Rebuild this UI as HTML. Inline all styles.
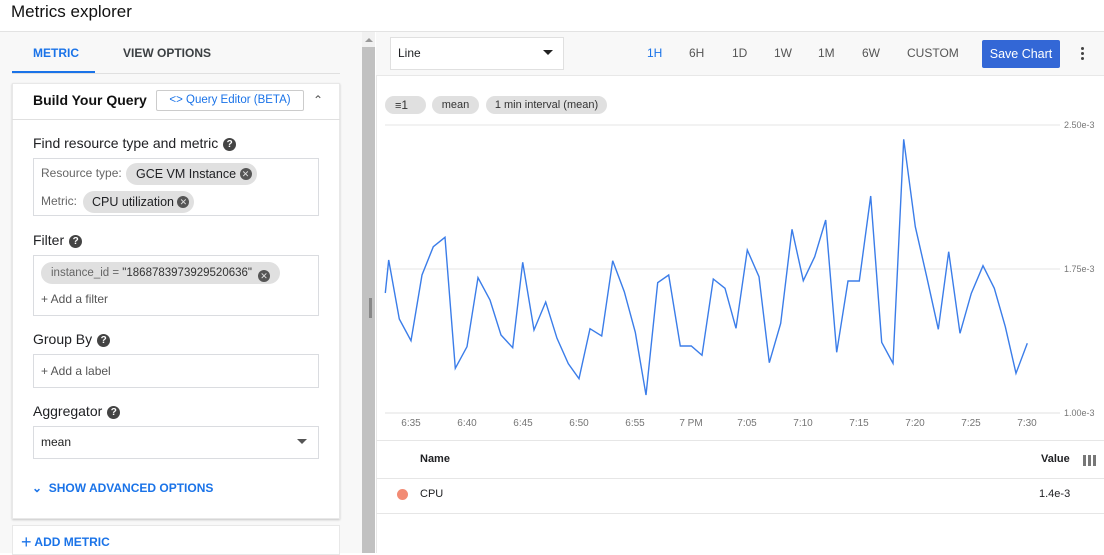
<!DOCTYPE html>
<html><head><meta charset="utf-8"><style>
*{box-sizing:border-box;margin:0;padding:0}
body{width:1104px;height:553px;overflow:hidden;background:#fff;font-family:"Liberation Sans",Arial,sans-serif;color:#202124;position:relative}
.a{position:absolute;white-space:nowrap}
.help{display:inline-block;width:13px;height:13px;border-radius:50%;background:#444;color:#fff;font-size:10px;font-weight:bold;text-align:center;line-height:13px;vertical-align:1px;margin-left:5px}
.chip{position:absolute;white-space:nowrap;background:#e0e0e0;border-radius:12px;height:22px;line-height:22px;font-size:13px;padding:0 10px}
.x{display:inline-block;width:12px;height:12px;border-radius:50%;background:#555;color:#e0e0e0;font-size:9px;line-height:12px;text-align:center;vertical-align:1px}
.box{position:absolute;left:33px;width:286px;border:1px solid #dadce0;background:#fff}
.lbl{position:absolute;left:33px;font-size:14px;white-space:nowrap}
.xl{position:absolute;top:418px;font-size:10px;color:#757575;transform:translateX(-50%)}
</style></head><body>
<div class="a" style="left:11px;top:2px;font-size:17px;color:#111">Metrics explorer</div>
<div class="a" style="left:0;top:31px;width:1104px;height:1px;background:#e3e3e3"></div>
<div class="a" style="left:0;top:32px;width:362px;height:521px;background:#f8f8f8"></div>
<div class="a" style="left:33px;top:46px;font-size:12px;font-weight:bold;color:#1a73e8">METRIC</div>
<div class="a" style="left:123px;top:46px;font-size:12px;font-weight:bold;color:#3c4043">VIEW OPTIONS</div>
<div class="a" style="left:12px;top:73px;width:328px;height:1px;background:#e0e0e0"></div>
<div class="a" style="left:12px;top:71px;width:83px;height:2px;background:#1a73e8"></div>
<div class="a" style="left:12px;top:83px;width:328px;height:436px;background:#fff;border:1px solid #e8e8e8;box-shadow:0 1px 2px rgba(0,0,0,.2)"></div>
<div class="a" style="left:12px;top:119px;width:328px;height:1px;background:#e0e0e0"></div>
<div class="a" style="left:33px;top:92px;font-size:14px;font-weight:bold;color:#111">Build Your Query</div>
<div class="a" style="left:156px;top:90px;width:148px;height:21px;border:1px solid #ccc;border-radius:2px;font-size:11.5px;color:#1a73e8;line-height:19px;text-align:center">&lt;&gt; Query Editor (BETA)</div>
<div class="a" style="left:313px;top:93px;font-size:12px;color:#555">&#8963;</div>
<div class="lbl" style="top:135px">Find resource type and metric<span class="help">?</span></div>
<div class="box" style="top:158px;height:58px"></div>
<div class="a" style="left:41px;top:166px;font-size:12px;color:#666">Resource type:</div>
<div class="chip" style="left:126px;top:163px;padding:0 5px 0 10px;font-size:12.5px">GCE VM Instance <span class="x">✕</span></div>
<div class="a" style="left:41px;top:194px;font-size:12px;color:#666">Metric:</div>
<div class="chip" style="left:83px;top:191px;padding:0 5px 0 9px;font-size:12.5px">CPU utilization <span class="x">✕</span></div>
<div class="lbl" style="top:232px">Filter<span class="help">?</span></div>
<div class="box" style="top:255px;height:61px"></div>
<div class="chip" style="left:41px;top:262px;width:239px;font-size:11.5px;color:#666">instance_id = <span style="color:#333">"1868783973929520636"</span></div>
<div class="a" style="left:258px;top:267px"><span class="x">✕</span></div>
<div class="a" style="left:41px;top:292px;font-size:12px;color:#555">+ Add a filter</div>
<div class="lbl" style="top:331px">Group By<span class="help">?</span></div>
<div class="box" style="top:354px;height:34px"></div>
<div class="a" style="left:41px;top:364px;font-size:12px;color:#555">+ Add a label</div>
<div class="lbl" style="top:403px">Aggregator<span class="help">?</span></div>
<div class="box" style="top:426px;height:33px"></div>
<div class="a" style="left:41px;top:435px;font-size:12px;color:#222">mean</div>
<div class="a" style="left:297px;top:439px;width:0;height:0;border-left:5px solid transparent;border-right:5px solid transparent;border-top:5px solid #555"></div>
<div class="a" style="left:32px;top:481px;font-size:12px;color:#1a73e8;font-weight:bold">&#8964;&nbsp; SHOW ADVANCED OPTIONS</div>
<div class="a" style="left:12px;top:525px;width:328px;height:30px;background:#fff;border:1px solid #e8e8e8"></div>
<div class="a" style="left:21px;top:532px;font-size:12px;color:#1a73e8;font-weight:bold"><span style="font-size:18px;font-weight:normal;vertical-align:-2px">+</span> ADD METRIC</div>
<div class="a" style="left:362px;top:32px;width:13px;height:521px;background:#f1f1f1"></div>
<div class="a" style="left:365px;top:38px;width:0;height:0;border-left:4px solid transparent;border-right:4px solid transparent;border-bottom:4px solid #999"></div>
<div class="a" style="left:362px;top:47px;width:13px;height:506px;background:#c1c1c1"></div>
<div class="a" style="left:369px;top:298px;width:3px;height:20px;background:#888"></div>
<div class="a" style="left:376px;top:32px;width:728px;height:44px;background:#f8f8f8;border-bottom:1px solid #e8e8e8"></div>
<div class="a" style="left:390px;top:37px;width:174px;height:33px;background:#fff;border:1px solid #e0e0e0"></div>
<div class="a" style="left:398px;top:46px;font-size:12px">Line</div>
<div class="a" style="left:543px;top:50px;width:0;height:0;border-left:5px solid transparent;border-right:5px solid transparent;border-top:5px solid #222"></div>
<div class="a" style="left:647px;top:46px;font-size:12px;color:#1a73e8">1H</div>
<div class="a" style="left:689px;top:46px;font-size:12px;color:#555">6H</div>
<div class="a" style="left:732px;top:46px;font-size:12px;color:#555">1D</div>
<div class="a" style="left:774px;top:46px;font-size:12px;color:#555">1W</div>
<div class="a" style="left:818px;top:46px;font-size:12px;color:#555">1M</div>
<div class="a" style="left:862px;top:46px;font-size:12px;color:#555">6W</div>
<div class="a" style="left:907px;top:46px;font-size:12px;color:#555">CUSTOM</div>
<div class="a" style="left:982px;top:40px;width:78px;height:28px;background:#3367d6;border-radius:2px;color:#fff;font-size:12.5px;line-height:28px;text-align:center">Save Chart</div>
<div class="a" style="left:1081px;top:47px;width:3px;font-size:0">
<div style="width:3px;height:3px;background:#444;border-radius:50%;margin-bottom:2px"></div><div style="width:3px;height:3px;background:#444;border-radius:50%;margin-bottom:2px"></div><div style="width:3px;height:3px;background:#444;border-radius:50%"></div></div>
<div class="a" style="left:376px;top:76px;width:1px;height:477px;background:#e8e8e8"></div>
<div class="chip" style="left:385px;top:96px;height:18px;line-height:18px;font-size:12px;padding:0 6px 0 10px;color:#333;width:41px"><span style="font-size:11px">&#8801;</span>1</div>
<div class="chip" style="left:432px;top:96px;height:18px;line-height:18px;font-size:11px;color:#333;width:47px;text-align:center;padding:0">mean</div>
<div class="chip" style="left:486px;top:96px;height:18px;line-height:18px;font-size:11px;color:#333;width:121px;text-align:center;padding:0">1 min interval (mean)</div>
<svg class="a" style="left:0;top:0" width="1104" height="553">
<line x1="385" y1="125" x2="1060" y2="125" stroke="#e6e6e6"/>
<line x1="385" y1="269" x2="1060" y2="269" stroke="#e6e6e6"/>
<line x1="385" y1="413" x2="1060" y2="413" stroke="#e0e0e0"/>
<polyline fill="none" stroke="#3b7de9" stroke-width="1.4" points="385.3,293 388.7,260 399.3,319 411,340.7 422,275 433.3,246.7 445,237.3 455.3,368.3 467,346.7 478,277.7 490,300 501,335 512.7,347.7 522.7,262.3 534,330 545.7,302 557,338.3 568.3,363.7 579,378.7 590,328.7 601.7,336 612.7,260.7 624.3,291.7 635.3,332.3 646,395 657.7,282.7 668.7,275 680.3,346 691.3,346 702,355.3 713.3,279 725,288.3 736,328.3 747.3,250 759,276.7 769.3,362.7 780.7,323.3 792,229.3 803.3,280.7 814.7,256.7 825.7,220 836.7,352.3 848,281 859.3,281 870.7,196 881.7,342.3 893,363.3 903.7,139.3 915.3,226.7 926.7,276.7 938.3,329.3 948.7,251.7 960,333.3 971.3,293.3 983,265.7 994.3,288.3 1005.3,326.7 1016,373.3 1027.3,343.3"/>
</svg>
<div class="a" style="left:1064px;top:120px;font-size:9px;color:#777">2.50e-3</div>
<div class="a" style="left:1064px;top:264px;font-size:9px;color:#777">1.75e-3</div>
<div class="a" style="left:1064px;top:408px;font-size:9px;color:#777">1.00e-3</div>
<div class="xl" style="left:411px">6:35</div><div class="xl" style="left:467px">6:40</div><div class="xl" style="left:523px">6:45</div><div class="xl" style="left:579px">6:50</div><div class="xl" style="left:635px">6:55</div><div class="xl" style="left:691px">7 PM</div><div class="xl" style="left:747px">7:05</div><div class="xl" style="left:803px">7:10</div><div class="xl" style="left:859px">7:15</div><div class="xl" style="left:915px">7:20</div><div class="xl" style="left:971px">7:25</div><div class="xl" style="left:1027px">7:30</div>
<div class="a" style="left:376px;top:440px;width:728px;height:1px;background:#e6e6e6"></div>
<div class="a" style="left:420px;top:453px;font-size:11px;font-weight:bold">Name</div>
<div class="a" style="left:1041px;top:453px;font-size:11px;font-weight:bold">Value</div>
<div class="a" style="left:1083px;top:455px;width:14px;height:11px;background:repeating-linear-gradient(90deg,#777 0 3px,transparent 3px 5px)"></div>
<div class="a" style="left:376px;top:478px;width:728px;height:1px;background:#e6e6e6"></div>
<div class="a" style="left:397px;top:489px;width:11px;height:11px;border-radius:50%;background:#f28b74"></div>
<div class="a" style="left:420px;top:488px;font-size:11px">CPU</div>
<div class="a" style="left:1039px;top:488px;font-size:11px">1.4e-3</div>
<div class="a" style="left:376px;top:513px;width:728px;height:1px;background:#e6e6e6"></div>
</body></html>
